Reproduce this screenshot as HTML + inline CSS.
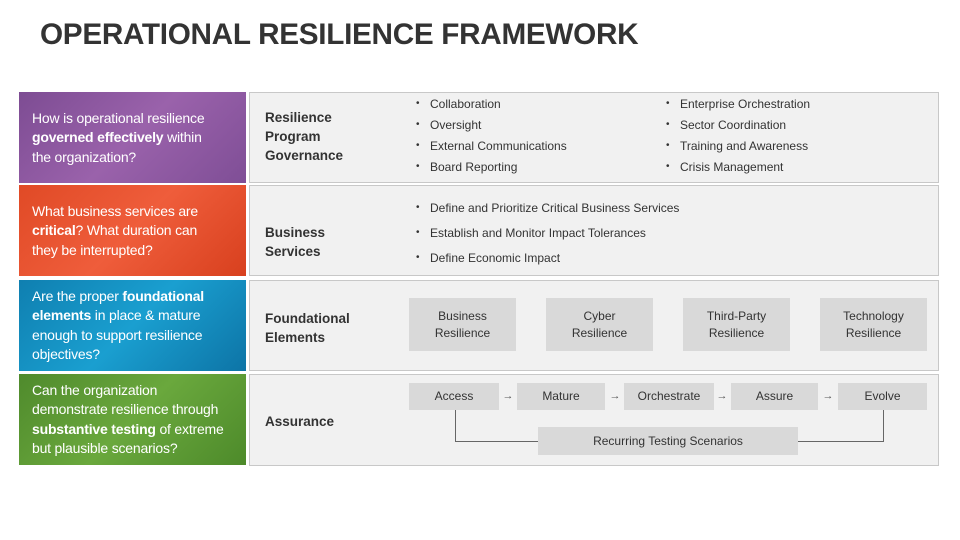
<!DOCTYPE html>
<html><head><style>
*{margin:0;padding:0;box-sizing:border-box}
body{width:960px;height:540px;background:#fff;font-family:"Liberation Sans",sans-serif;position:relative;overflow:hidden;color:#333}
h1{position:absolute;left:40px;top:18px;font-size:30px;font-weight:bold;color:#333;white-space:nowrap;transform:scaleX(0.99);transform-origin:left top;letter-spacing:-0.3px}
.q{position:absolute;left:19px;width:227px;height:91px;color:#fff;font-size:14px;line-height:19.5px;letter-spacing:-0.2px}
.q div{position:absolute;left:13px;top:50%;transform:translateY(-50%);white-space:nowrap}
.q b{font-weight:bold}
.p{position:absolute;left:249px;width:690px;background:#f1f1f1;border:1px solid #c8c8c8}
.l{position:absolute;left:265px;font-weight:bold;font-size:13.5px;line-height:19px;color:#333}
.t{position:absolute;font-size:12px;color:#333;white-space:nowrap}
.t:before{content:"•";position:absolute;left:-14px;font-size:10px;top:1px}
.bx{position:absolute;background:#d9d9d9;font-size:12px;color:#333;text-align:center;display:flex;align-items:center;justify-content:center;line-height:17px}
.ln{position:absolute;background:#666}
.ar{position:absolute;font-size:11px;color:#555;top:390px;width:20px;text-align:center;line-height:12px}
</style></head><body>
<h1>OPERATIONAL RESILIENCE FRAMEWORK</h1>

<div class="q" style="top:92px;background:linear-gradient(135deg,#7d4c93,#9a62ab 50%,#7f4e96)"><div>How is operational resilience<br><b>governed effectively</b> within<br>the organization?</div></div>
<div class="q" style="top:185px;background:linear-gradient(135deg,#e04a26,#ef5d3b 50%,#d8401e)"><div>What business services are<br><b>critical</b>? What duration can<br>they be interrupted?</div></div>
<div class="q" style="top:280px;background:linear-gradient(135deg,#0f7fb0,#1a9fd0 50%,#0d74a6)"><div>Are the proper <b>foundational<br>elements</b> in place &amp; mature<br>enough to support resilience<br>objectives?</div></div>
<div class="q" style="top:374px;background:linear-gradient(135deg,#4f8a2c,#6aa83d 50%,#4d8a2a)"><div>Can the organization<br>demonstrate resilience through<br><b>substantive testing</b> of extreme<br>but plausible scenarios?</div></div>

<div class="p" style="top:92px;height:91px"></div>
<div class="p" style="top:185px;height:91px"></div>
<div class="p" style="top:280px;height:91px"></div>
<div class="p" style="top:374px;height:92px"></div>

<div class="l" style="top:108px">Resilience<br>Program<br>Governance</div>
<div class="l" style="top:223px">Business<br>Services</div>
<div class="l" style="top:309px">Foundational<br>Elements</div>
<div class="l" style="top:412px">Assurance</div>

<div class="t" style="left:430px;top:97px">Collaboration</div>
<div class="t" style="left:430px;top:118px">Oversight</div>
<div class="t" style="left:430px;top:139px">External Communications</div>
<div class="t" style="left:430px;top:160px">Board Reporting</div>
<div class="t" style="left:680px;top:97px">Enterprise Orchestration</div>
<div class="t" style="left:680px;top:118px">Sector Coordination</div>
<div class="t" style="left:680px;top:139px">Training and Awareness</div>
<div class="t" style="left:680px;top:160px">Crisis Management</div>

<div class="t" style="left:430px;top:201px">Define and Prioritize Critical Business Services</div>
<div class="t" style="left:430px;top:226px">Establish and Monitor Impact Tolerances</div>
<div class="t" style="left:430px;top:251px">Define Economic Impact</div>

<div class="bx" style="left:409px;top:298px;width:107px;height:53px">Business<br>Resilience</div>
<div class="bx" style="left:546px;top:298px;width:107px;height:53px">Cyber<br>Resilience</div>
<div class="bx" style="left:683px;top:298px;width:107px;height:53px">Third-Party<br>Resilience</div>
<div class="bx" style="left:820px;top:298px;width:107px;height:53px">Technology<br>Resilience</div>

<div class="ln" style="left:455px;top:410px;width:1px;height:32px"></div>
<div class="ln" style="left:455px;top:441px;width:83px;height:1px"></div>
<div class="ln" style="left:883px;top:410px;width:1px;height:32px"></div>
<div class="ln" style="left:798px;top:441px;width:86px;height:1px"></div>

<div class="bx" style="left:409px;top:383px;width:90px;height:27px">Access</div>
<div class="bx" style="left:517px;top:383px;width:88px;height:27px">Mature</div>
<div class="bx" style="left:624px;top:383px;width:90px;height:27px">Orchestrate</div>
<div class="bx" style="left:731px;top:383px;width:87px;height:27px">Assure</div>
<div class="bx" style="left:838px;top:383px;width:89px;height:27px">Evolve</div>
<div class="bx" style="left:538px;top:427px;width:260px;height:28px">Recurring Testing Scenarios</div>

<div class="ar" style="left:498px">→</div>
<div class="ar" style="left:605px">→</div>
<div class="ar" style="left:712px">→</div>
<div class="ar" style="left:818px">→</div>
</body></html>
